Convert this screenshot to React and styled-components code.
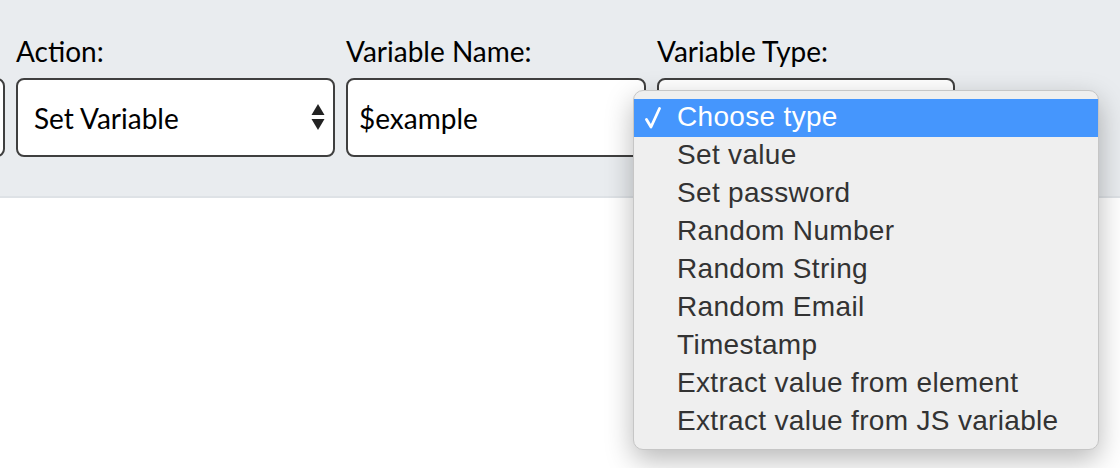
import styled, { createGlobalStyle } from "styled-components";

const GlobalStyle = createGlobalStyle`
  body {
    margin: 0;
    padding: 0;
    background: #ffffff;
    font-family: Lato, "Liberation Sans", sans-serif;
  }
`;

const TYPES = [
  "Choose type",
  "Set value",
  "Set password",
  "Random Number",
  "Random String",
  "Random Email",
  "Timestamp",
  "Extract value from element",
  "Extract value from JS variable",
];

function App() {
  return (
    <Page>
      <GlobalStyle />
      <Panel>
        <Row>
          <Field $width={100} $shift={-95}>
            <Label>&nbsp;</Label>
            <Box />
          </Field>
          <Field $width={319}>
            <Label>Action:</Label>
            <Box $select>
              Set Variable
              <Arrows viewBox="0 0 14 27">
                <path d="M7 0 L13.5 11 L0.5 11 Z" fill="#222" />
                <path d="M0.5 15 L13.5 15 L7 26 Z" fill="#222" />
              </Arrows>
            </Box>
          </Field>
          <Field $width={300}>
            <Label>Variable Name:</Label>
            <Box $input>$example</Box>
          </Field>
          <Field $width={298}>
            <Label>Variable Type:</Label>
            <Box />
            <Menu>
              {TYPES.map((t, i) => (
                <Item key={t} $active={i === 0}>
                  {i === 0 && (
                    <Check viewBox="0 0 16 22">
                      <path
                        d="M1.5 12.5 L6 20 L14.5 1.5"
                        fill="none"
                        stroke="#fff"
                        strokeWidth="2.8"
                        strokeLinecap="round"
                        strokeLinejoin="round"
                      />
                    </Check>
                  )}
                  {t}
                </Item>
              ))}
            </Menu>
          </Field>
        </Row>
      </Panel>
    </Page>
  );
}

export default App;

const Page = styled.div`
  min-height: 100vh;
  overflow: hidden;
  background: #ffffff;
`;

const Panel = styled.div`
  height: 198px;
  background-color: #e9ecef;
  border-bottom: 2px solid #dee2e6;
  box-sizing: border-box;
  padding-top: 34px;
  position: relative;
  z-index: 1;
`;

const Row = styled.div`
  display: flex;
  gap: 11px;
`;

const Field = styled.div`
  position: relative;
  flex: 0 0 ${(p) => p.$width}px;
  margin-left: ${(p) => p.$shift || 0}px;
  display: flex;
  flex-direction: column;
`;

const Label = styled.div`
  font-size: 28px;
  line-height: 34px;
  color: #000;
  margin-bottom: 10px;
  white-space: nowrap;
`;

const Box = styled.div`
  height: 79px;
  box-sizing: border-box;
  background: #fff;
  border: 2px solid #3f3f3f;
  border-radius: 8px;
  display: flex;
  align-items: center;
  justify-content: space-between;
  padding: 0 8px 0 ${(p) => (p.$select ? 16 : 11)}px;
  font-size: 28px;
  color: #000;
  white-space: nowrap;
`;

const Arrows = styled.svg`
  width: 14px;
  height: 27px;
`;

const Menu = styled.div`
  position: absolute;
  left: -24px;
  top: 56px;
  width: 466px;
  box-sizing: border-box;
  padding: 8px 0;
  background: #efefef;
  border: 1px solid #c6c6c6;
  border-radius: 10px;
  box-shadow: 0 10px 28px rgba(0, 0, 0, 0.28);
  font-family: "Liberation Sans", Arial, sans-serif;
`;

const Item = styled.div`
  position: relative;
  height: 38px;
  line-height: 35px;
  padding-left: 43px;
  font-size: 28px;
  letter-spacing: 0.32px;
  color: ${(p) => (p.$active ? "#ffffff" : "#333333")};
  background: ${(p) => (p.$active ? "#4596fd" : "transparent")};
  white-space: nowrap;
`;

const Check = styled.svg`
  position: absolute;
  left: 11px;
  top: 8px;
  width: 16px;
  height: 22px;
`;
